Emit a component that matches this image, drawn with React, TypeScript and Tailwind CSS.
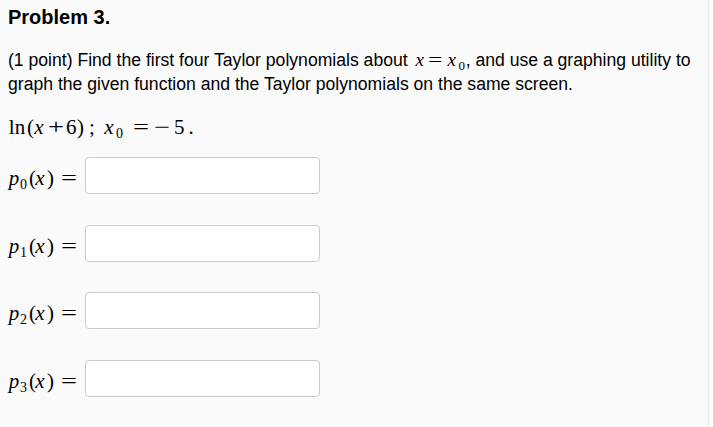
import React from "react";

const serif = { fontFamily: '"Liberation Serif", "DejaVu Serif", serif' };

type Tok = {
  t: string;
  l: number; // left edge of box (px, relative to line start)
  w: number; // box width
  it?: boolean;
  sub?: boolean;
  wide?: boolean;
};

function MathRun({ toks, size, subSize }: { toks: Tok[]; size: string; subSize: string }) {
  let prev = 0;
  return (
    <span className="inline-flex items-baseline whitespace-nowrap" style={serif}>
      {toks.map((k, i) => {
        const ml = k.l - prev;
        prev = k.l + k.w;
        const cls = [
          "inline-block text-center",
          k.it ? "italic" : "",
          k.sub ? `${subSize} relative top-[4px]` : size,
        ].join(" ");
        return (
          <span key={i} className={cls} style={{ marginLeft: ml, width: k.w }}>
            {k.wide ? <span className="inline-block scale-x-[1.35]">{k.t}</span> : k.t}
          </span>
        );
      })}
    </span>
  );
}

function Row({ n }: { n: string }) {
  const toks: Tok[] = [
    { t: "p", l: 0, w: 12, it: true },
    { t: n, l: 12, w: 6, sub: true },
    { t: "(", l: 21, w: 5 },
    { t: "x", l: 26, w: 12, it: true },
    { t: ")", l: 39, w: 6 },
    { t: "=", l: 52, w: 18, wide: true },
  ];
  return (
    <div className="flex items-end">
      <div className="w-[77px] leading-[24px] pb-[1px]">
        <MathRun toks={toks} size="text-[21px]" subSize="text-[14px]" />
      </div>
      <div className="w-[235px] h-[37px] bg-white border border-[#cccccc] rounded-[4px]" />
    </div>
  );
}

export default function App() {
  const inline: Tok[] = [
    { t: "x", l: 6, w: 12, it: true },
    { t: "=", l: 20, w: 15, wide: true },
    { t: "x", l: 38, w: 12, it: true },
    { t: "0", l: 50, w: 8, sub: true },
  ];
  const line: Tok[] = [
    { t: "ln", l: 0, w: 18 },
    { t: "(", l: 19, w: 6 },
    { t: "x", l: 25, w: 12, it: true },
    { t: "+", l: 40, w: 16, wide: true },
    { t: "6", l: 58, w: 10 },
    { t: ")", l: 69, w: 6 },
    { t: ";", l: 81, w: 6 },
    { t: "x", l: 95, w: 12, it: true },
    { t: "0", l: 107, w: 9, sub: true },
    { t: "=", l: 124, w: 18, wide: true },
    { t: "−", l: 145, w: 18, wide: true },
    { t: "5", l: 166, w: 10 },
    { t: ".", l: 180, w: 6 },
  ];
  return (
    <div
      className="w-[709px] min-h-[427px] bg-[#fafafa] border-r border-[#e3e3e3] px-[8px] pt-[6px] text-black"
      style={{ fontFamily: '"Liberation Sans", Arial, sans-serif' }}
    >
      <h1 className="text-[20px] font-bold leading-[23px]">Problem 3.</h1>
      <p className="mt-[19px] text-[17.6px] leading-[24px]">
        (1 point) Find the first four Taylor polynomials about
        <span className="leading-none">
          <MathRun toks={inline} size="text-[19px]" subSize="text-[13px]" />
        </span>
        <span>, and use a graphing utility to</span> graph the given function and the Taylor
        polynomials on the same screen.
      </p>
      <div className="mt-[19px] leading-[24px]">
        <MathRun toks={line} size="text-[21px]" subSize="text-[14px]" />
      </div>
      <div className="mt-[15px] flex flex-col">
        <Row n="0" />
        <div className="mt-[31px]">
          <Row n="1" />
        </div>
        <div className="mt-[30px]">
          <Row n="2" />
        </div>
        <div className="mt-[31px]">
          <Row n="3" />
        </div>
      </div>
    </div>
  );
}
